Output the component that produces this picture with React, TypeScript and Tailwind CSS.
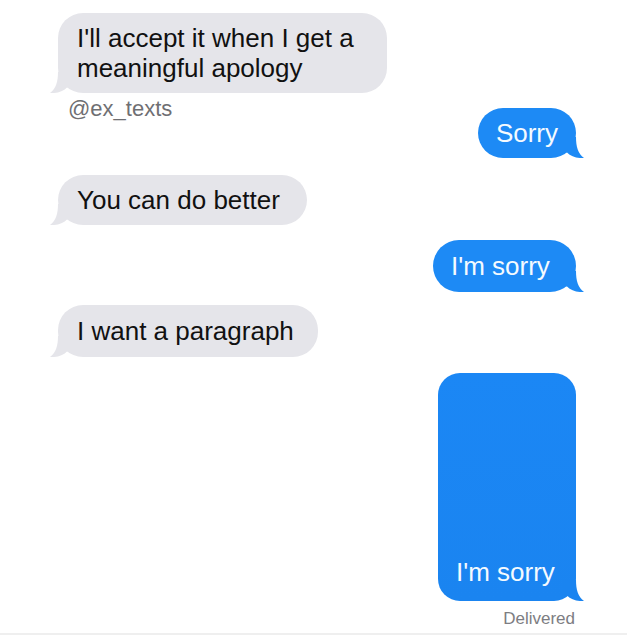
import type { ReactNode } from "react";

const FONT = "font-['Liberation_Sans','Helvetica_Neue',Arial,sans-serif]";

// iOS-style bubble tail, drawn for the left corner and mirrored for the right one
function Tail({ side, color }: { side: "left" | "right"; color: string }) {
  return (
    <svg
      aria-hidden="true"
      width="22"
      height="21"
      viewBox="0 0 22 21"
      className={
        side === "left"
          ? "absolute -left-[8px] bottom-0"
          : "absolute -right-[8px] bottom-0 -scale-x-100"
      }
    >
      <path d="M8 0 C8 10 6 16.5 0 21 C7 21.5 13 19.5 17 15.5 L22 15.5 L22 0 Z" fill={color} />
    </svg>
  );
}

function Incoming({ children, className }: { children: ReactNode; className: string }) {
  return (
    <div
      className={`relative flex items-center rounded-[25px] bg-[#e5e5ea] pl-[19px] text-[26px] leading-[30px] text-[#111111] ${className}`}
    >
      <Tail side="left" color="#e5e5ea" />
      <span className="relative">{children}</span>
    </div>
  );
}

function Outgoing({ children, className }: { children: ReactNode; className: string }) {
  return (
    <div
      className={`relative flex items-center self-end rounded-[26px] bg-[#1d8af5] px-[18px] text-[26px] leading-[30px] text-[#f4faff] ${className}`}
    >
      <Tail side="right" color="#1d8af5" />
      <span className="relative">{children}</span>
    </div>
  );
}

export default function App() {
  return (
    <div className={`h-[635px] w-[627px] overflow-hidden border-b-2 border-[#efefef] bg-white ${FONT}`}>
      <div className="flex flex-col pl-[58px] pr-[51px] pt-[13px]">
        <Incoming className="h-[80px] w-[329px]">
          I'll accept it when I get a
          <br />
          meaningful apology
        </Incoming>
        <p className="ml-[10px] mt-[4px] text-[22px] leading-[24px] text-[#6f6f73]">@ex_texts</p>

        <Outgoing className="-mt-[13px] h-[50px]">Sorry</Outgoing>

        <Incoming className="mt-[17px] h-[50px] w-[249px]">You can do better</Incoming>

        <Outgoing className="mt-[15px] h-[52px] w-[143px]">I'm sorry</Outgoing>

        <Incoming className="mt-[13px] h-[52px] w-[260px]">I want a paragraph</Incoming>

        {/* the tall, empty "paragraph" reply */}
        <div className="relative mt-[16px] flex h-[228px] w-[138px] items-end self-end rounded-[22px] bg-gradient-to-b from-[#1b87f5] to-[#1a84f0] px-[18px] pb-[14px] text-[26px] leading-[30px] text-[#f4faff]">
          <Tail side="right" color="#1a84f0" />
          <span className="relative">I'm sorry</span>
        </div>
        <p className="mt-[9px] self-end pr-[1px] text-[17px] leading-[18px] text-[#7d7d82]">Delivered</p>
      </div>
    </div>
  );
}
